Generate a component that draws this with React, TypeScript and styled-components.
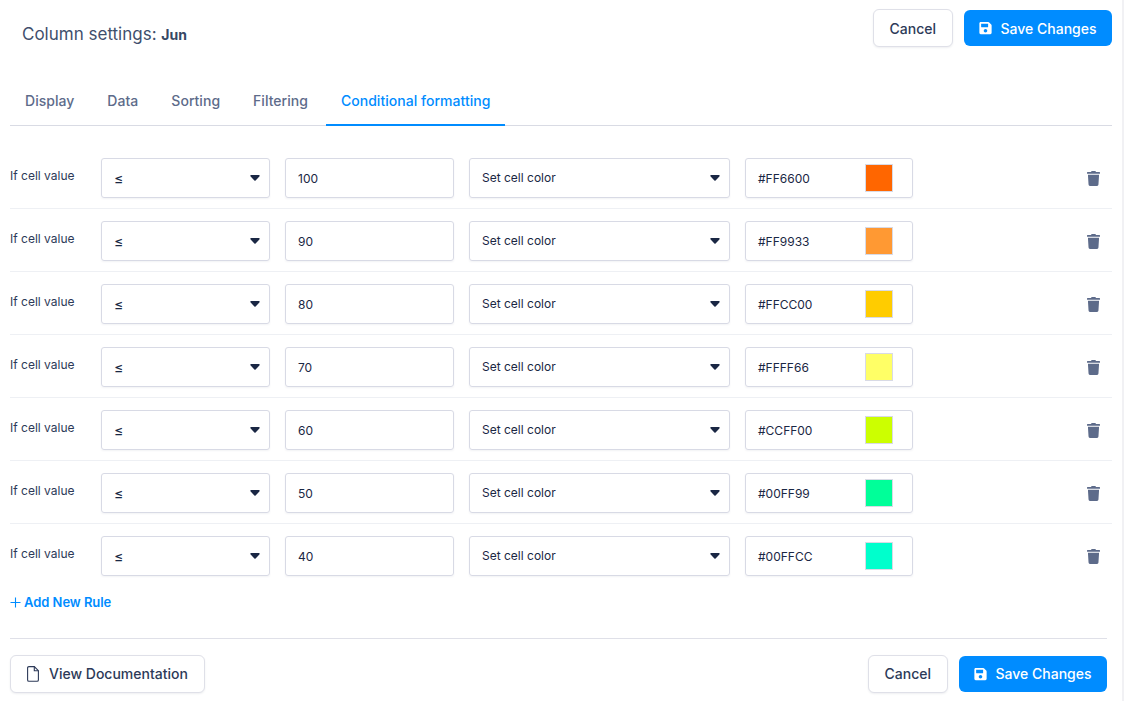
import React from 'react';
import styled, { createGlobalStyle } from 'styled-components';

const rules = [
  { limit: '100', color: '#FF6600' },
  { limit: '90', color: '#FF9933' },
  { limit: '80', color: '#FFCC00' },
  { limit: '70', color: '#FFFF66' },
  { limit: '60', color: '#CCFF00' },
  { limit: '50', color: '#00FF99' },
  { limit: '40', color: '#00FFCC' },
];

const tabs = ['Display', 'Data', 'Sorting', 'Filtering', 'Conditional formatting'];

const SaveIcon = () => (
  <svg width="13" height="14" viewBox="0 0 448 512" fill="currentColor">
    <path d="M433.900 129.900l-83.900-83.900A48 48 0 0 0 316.100 32H48C21.500 32 0 53.500 0 80v352c0 26.500 21.500 48 48 48h352c26.500 0 48-21.500 48-48V163.900a48 48 0 0 0-14.100-34zM224 416c-35.300 0-64-28.700-64-64 0-35.300 28.700-64 64-64s64 28.700 64 64c0 35.300-28.700 64-64 64zm96-304.500V212c0 6.600-5.400 12-12 12H76c-6.600 0-12-5.400-12-12V108c0-6.600 5.400-12 12-12h228.500c3.200 0 6.200 1.300 8.500 3.500l3.500 3.500c2.200 2.200 3.500 5.300 3.500 8.500z" />
  </svg>
);

const TrashIcon = () => (
  <svg width="13" height="15" viewBox="0 0 448 512" fill="currentColor">
    <path d="M432 32H312l-9.400-18.700A24 24 0 0 0 281.100 0H166.800a23.700 23.700 0 0 0-21.400 13.300L136 32H16A16 16 0 0 0 0 48v32a16 16 0 0 0 16 16h416a16 16 0 0 0 16-16V48a16 16 0 0 0-16-16zM53.200 467a48 48 0 0 0 47.900 45h245.800a48 48 0 0 0 47.900-45L416 128H32z" />
  </svg>
);

const FileIcon = () => (
  <svg width="12" height="16" viewBox="0 0 12 16" fill="none" stroke="currentColor" strokeWidth="1.1">
    <path d="M1.900 0.600h5.400l4.100 4.100v9.300a1.300 1.300 0 0 1-1.300 1.300H1.900A1.300 1.300 0 0 1 0.600 14V1.900a1.300 1.300 0 0 1 1.300-1.300z" />
    <path d="M7.300 0.600v4.100h4.100" />
  </svg>
);

const PlusIcon = () => (
  <svg width="11" height="11" viewBox="0 0 11 11" fill="none" stroke="currentColor" strokeWidth="1.100">
    <path d="M5.500 0.500v10M0.500 5.500h10" />
  </svg>
);

const Caret = () => (
  <svg width="10" height="6" viewBox="0 0 10 6" fill="currentColor">
    <path d="M0.300 0.800C0.300 0.300 0.600 0 1 0h8c0.400 0 0.700 0.300 0.700 0.800 0 0.200-0.100 0.400-0.300 0.600L5.600 5.500a0.900 0.900 0 0 1-1.200 0L0.600 1.400a0.800 0.800 0 0 1-0.300-0.600z" />
  </svg>
);

export default function App() {
  return (
    <Page>
      <GlobalStyle />
      <Header>
        <Title>
          Column settings: <strong>Jun</strong>
        </Title>
        <Actions>
          <OutlineButton>Cancel</OutlineButton>
          <PrimaryButton>
            <SaveIcon />
            Save Changes
          </PrimaryButton>
        </Actions>
      </Header>
      <TabBar>
        {tabs.map((tab) => (
          <Tab key={tab} $active={tab === 'Conditional formatting'}>
            {tab}
          </Tab>
        ))}
      </TabBar>
      <RuleList>
        {rules.map((rule) => (
          <Rule key={rule.color}>
            <RuleLabel>If cell value</RuleLabel>
            <Select $width={169}>
              <Operator>≤</Operator>
              <Caret />
            </Select>
            <Field $width={169}>{rule.limit}</Field>
            <Select $width={261}>
              <ActionText>Set cell color</ActionText>
              <Caret />
            </Select>
            <ColorField $width={168}>
              {rule.color}
              <Swatch $color={rule.color} />
            </ColorField>
            <DeleteButton>
              <TrashIcon />
            </DeleteButton>
          </Rule>
        ))}
      </RuleList>
      <AddRule>
        <PlusIcon />
        Add New Rule
      </AddRule>
      <Footer>
        <OutlineButton>
          <FileIcon />
          View Documentation
        </OutlineButton>
        <Actions>
          <OutlineButton>Cancel</OutlineButton>
          <PrimaryButton>
            <SaveIcon />
            Save Changes
          </PrimaryButton>
        </Actions>
      </Footer>
      <ScrollTrack />
    </Page>
  );
}

const GlobalStyle = createGlobalStyle`
  html, body {
    margin: 0;
    background: #ffffff;
    overflow: hidden;
  }
`;

const Page = styled.div`
  position: relative;
  box-sizing: border-box;
  width: 1124px;
  height: 701px;
  padding: 9px 12px 0 10px;
  overflow: hidden;
  font-family: 'Inter', 'Liberation Sans', sans-serif;
  color: #2d3a58;
`;

const Header = styled.div`
  display: flex;
  justify-content: space-between;
  align-items: flex-start;
  height: 38px;
`;

const Title = styled.h2`
  margin: 12px 0 0 12px;
  font-size: 17px;
  line-height: 26px;
  font-weight: 400;
  color: #3f4f6d;

  & > strong {
    font-size: 14px;
    font-weight: 700;
    color: #364765;
  }
`;

const Actions = styled.div`
  display: flex;
  align-items: center;
  gap: 11px;
  height: 38px;
`;

const OutlineButton = styled.button`
  display: inline-flex;
  align-items: center;
  justify-content: center;
  gap: 10px;
  height: 38px;
  padding: 0 16px;
  min-width: 80px;
  box-sizing: border-box;
  border: 1px solid #dfe0e8;
  border-radius: 6px;
  background: #ffffff;
  box-shadow: 0 1px 2px rgba(40, 50, 80, 0.08);
  font: 500 14px 'Inter', sans-serif;
  color: #2d3a58;
`;

const PrimaryButton = styled.button`
  display: inline-flex;
  align-items: center;
  justify-content: center;
  gap: 8px;
  width: 148px;
  height: 36px;
  box-sizing: border-box;
  border: 0;
  border-radius: 6px;
  background: #008cff;
  font: 500 14px 'Inter', sans-serif;
  color: #ffffff;
`;

const TabBar = styled.div`
  display: flex;
  gap: 3px;
  height: 44px;
  margin-top: 34px;
  border-bottom: 1px solid #d9dbe4;
`;

const Tab = styled.div<{ $active?: boolean }>`
  display: flex;
  align-items: center;
  height: 45px;
  padding: 0 15px 4px;
  box-sizing: border-box;
  font-size: 14px;
  font-weight: 500;
  letter-spacing: 0.03px;
  border-bottom: 2px solid ${(p) => (p.$active ? '#008cff' : 'transparent')};
  color: ${(p) => (p.$active ? '#008cff' : '#5d6b8a')};
`;

const RuleList = styled.div`
  display: flex;
  flex-direction: column;
  margin-top: 23px;
`;

const Rule = styled.div`
  display: flex;
  align-items: flex-start;
  gap: 15px;
  height: 50px;
  padding-top: 10px;
  border-bottom: 1px solid #eef0f4;
  margin-top: -1px;
  margin-bottom: 3px;

  &:last-child {
    border-bottom: 0;
  }
`;

const RuleLabel = styled.div`
  width: 76px;
  padding-top: 10px;
  font-size: 12px;
  line-height: 16px;
  font-weight: 400;
  color: #2d3a58;
`;

const Select = styled.div<{ $width: number }>`
  display: flex;
  align-items: center;
  justify-content: space-between;
  box-sizing: border-box;
  width: ${(p) => p.$width}px;
  height: 40px;
  padding: 0 9px 0 12px;
  border: 1px solid #d8dae5;
  border-radius: 3px;
  box-shadow: 0 1px 2px rgba(40, 50, 80, 0.06);
  font-size: 12px;
  color: #1a2744;
`;

const Operator = styled.span`
  font-size: 14px;
`;

const ActionText = styled.span`
  margin-bottom: 2px;
`;

const Field = styled.div<{ $width: number }>`
  display: flex;
  align-items: center;
  box-sizing: border-box;
  width: ${(p) => p.$width}px;
  height: 40px;
  padding: 0 12px;
  border: 1px solid #d8dae5;
  border-radius: 3px;
  box-shadow: 0 1px 2px rgba(40, 50, 80, 0.06);
  font-size: 12px;
  color: #1a2744;
`;

const ColorField = styled(Field)`
  justify-content: space-between;
  padding-right: 19px;
`;

const Swatch = styled.span<{ $color: string }>`
  width: 28px;
  height: 28px;
  box-sizing: border-box;
  border: 1px solid #d8dae5;
  background: ${(p) => p.$color};
`;

const DeleteButton = styled.div`
  display: flex;
  align-items: center;
  justify-content: center;
  width: 13px;
  height: 40px;
  margin-left: auto;
  margin-right: 12px;
  color: #5d6b8a;
`;

const AddRule = styled.div`
  display: flex;
  align-items: center;
  gap: 3px;
  height: 20px;
  margin-top: 3px;
  font-size: 13px;
  font-weight: 600;
  letter-spacing: -0.05px;
  color: #008cff;
`;

const Footer = styled.div`
  display: flex;
  justify-content: space-between;
  align-items: center;
  width: 1097px;
  height: 54px;
  margin-top: 26px;
  padding-top: 16px;
  box-sizing: border-box;
  border-top: 1px solid #dfe0e8;
`;

const ScrollTrack = styled.div`
  position: absolute;
  top: 0;
  right: 0;
  width: 2px;
  height: 100%;
  background: #f1f1f4;
`;
